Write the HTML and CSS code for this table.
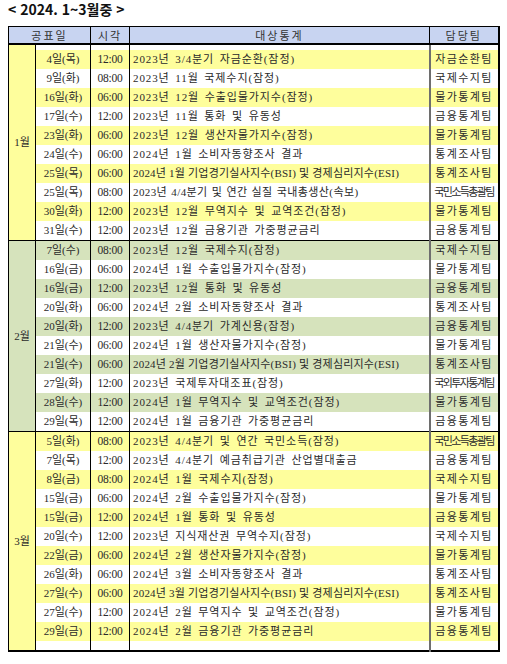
FILE: index.html
```html
<!DOCTYPE html>
<html lang="ko">
<head>
<meta charset="utf-8">
<title>2024. 1~3월중 공표 일정</title>
<link rel="stylesheet" href="styles.css">
</head>
<body>
<h1 class="title">&lt; 2024. 1~3월중 &gt;</h1>
<table class="sched">
  <colgroup>
    <col class="c-mon"><col class="c-date"><col class="c-time"><col class="c-subj"><col class="c-team">
  </colgroup>
  <thead>
    <tr><th colspan="2">공표일</th><th>시각</th><th>대상통계</th><th>담당팀</th></tr>
  </thead>
  <tbody class="jan">
    <tr class="pad"><td class="mon" rowspan="11">1월</td><td class="date"></td><td class="time"></td><td class="subj"></td><td class="team"></td></tr>
    <tr class="hl"><td class="date">4일(목)</td><td class="time">12:00</td><td class="subj">2023년 3/4분기 자금순환(잠정)</td><td class="team">자금순환팀</td></tr>
    <tr><td class="date">9일(화)</td><td class="time">08:00</td><td class="subj">2023년 11월 국제수지(잠정)</td><td class="team">국제수지팀</td></tr>
    <tr class="hl"><td class="date">16일(화)</td><td class="time">06:00</td><td class="subj">2023년 12월 수출입물가지수(잠정)</td><td class="team">물가통계팀</td></tr>
    <tr><td class="date">17일(수)</td><td class="time">12:00</td><td class="subj">2023년 11월 통화 및 유동성</td><td class="team">금융통계팀</td></tr>
    <tr class="hl"><td class="date">23일(화)</td><td class="time">06:00</td><td class="subj">2023년 12월 생산자물가지수(잠정)</td><td class="team">물가통계팀</td></tr>
    <tr><td class="date">24일(수)</td><td class="time">06:00</td><td class="subj">2024년 1월 소비자동향조사 결과</td><td class="team">통계조사팀</td></tr>
    <tr class="hl"><td class="date">25일(목)</td><td class="time">06:00</td><td class="subj tight">2024년 1월 기업경기실사지수(BSI) 및 경제심리지수(ESI)</td><td class="team">통계조사팀</td></tr>
    <tr><td class="date">25일(목)</td><td class="time">08:00</td><td class="subj mid">2023년 4/4분기 및 연간 실질 국내총생산(속보)</td><td class="team long">국민소득총괄팀</td></tr>
    <tr class="hl"><td class="date">30일(화)</td><td class="time">12:00</td><td class="subj">2023년 12월 무역지수 및 교역조건(잠정)</td><td class="team">물가통계팀</td></tr>
    <tr><td class="date">31일(수)</td><td class="time">12:00</td><td class="subj">2023년 12월 금융기관 가중평균금리</td><td class="team">금융통계팀</td></tr>
  </tbody>
  <tbody class="feb">
    <tr class="hl"><td class="mon" rowspan="10">2월</td><td class="date">7일(수)</td><td class="time">08:00</td><td class="subj">2023년 12월 국제수지(잠정)</td><td class="team">국제수지팀</td></tr>
    <tr><td class="date">16일(금)</td><td class="time">06:00</td><td class="subj">2024년 1월 수출입물가지수(잠정)</td><td class="team">물가통계팀</td></tr>
    <tr class="hl"><td class="date">16일(금)</td><td class="time">12:00</td><td class="subj">2023년 12월 통화 및 유동성</td><td class="team">금융통계팀</td></tr>
    <tr><td class="date">20일(화)</td><td class="time">06:00</td><td class="subj">2024년 2월 소비자동향조사 결과</td><td class="team">통계조사팀</td></tr>
    <tr class="hl"><td class="date">20일(화)</td><td class="time">12:00</td><td class="subj">2023년 4/4분기 가계신용(잠정)</td><td class="team">금융통계팀</td></tr>
    <tr><td class="date">21일(수)</td><td class="time">06:00</td><td class="subj">2024년 1월 생산자물가지수(잠정)</td><td class="team">물가통계팀</td></tr>
    <tr class="hl"><td class="date">21일(수)</td><td class="time">06:00</td><td class="subj tight">2024년 2월 기업경기실사지수(BSI) 및 경제심리지수(ESI)</td><td class="team">통계조사팀</td></tr>
    <tr><td class="date">27일(화)</td><td class="time">12:00</td><td class="subj">2023년 국제투자대조표(잠정)</td><td class="team long">국외투자통계팀</td></tr>
    <tr class="hl"><td class="date">28일(수)</td><td class="time">12:00</td><td class="subj">2024년 1월 무역지수 및 교역조건(잠정)</td><td class="team">물가통계팀</td></tr>
    <tr><td class="date">29일(목)</td><td class="time">12:00</td><td class="subj">2024년 1월 금융기관 가중평균금리</td><td class="team">금융통계팀</td></tr>
  </tbody>
  <tbody class="mar">
    <tr class="hl"><td class="mon" rowspan="12">3월</td><td class="date">5일(화)</td><td class="time">08:00</td><td class="subj">2023년 4/4분기 및 연간 국민소득(잠정)</td><td class="team long">국민소득총괄팀</td></tr>
    <tr><td class="date">7일(목)</td><td class="time">12:00</td><td class="subj">2023년 4/4분기 예금취급기관 산업별대출금</td><td class="team">금융통계팀</td></tr>
    <tr class="hl"><td class="date">8일(금)</td><td class="time">08:00</td><td class="subj">2024년 1월 국제수지(잠정)</td><td class="team">국제수지팀</td></tr>
    <tr><td class="date">15일(금)</td><td class="time">06:00</td><td class="subj">2024년 2월 수출입물가지수(잠정)</td><td class="team">물가통계팀</td></tr>
    <tr class="hl"><td class="date">15일(금)</td><td class="time">12:00</td><td class="subj">2024년 1월 통화 및 유동성</td><td class="team">금융통계팀</td></tr>
    <tr><td class="date">20일(수)</td><td class="time">12:00</td><td class="subj">2023년 지식재산권 무역수지(잠정)</td><td class="team">국제수지팀</td></tr>
    <tr class="hl"><td class="date">22일(금)</td><td class="time">06:00</td><td class="subj">2024년 2월 생산자물가지수(잠정)</td><td class="team">물가통계팀</td></tr>
    <tr><td class="date">26일(화)</td><td class="time">06:00</td><td class="subj">2024년 3월 소비자동향조사 결과</td><td class="team">통계조사팀</td></tr>
    <tr class="hl"><td class="date">27일(수)</td><td class="time">06:00</td><td class="subj tight">2024년 3월 기업경기실사지수(BSI) 및 경제심리지수(ESI)</td><td class="team">통계조사팀</td></tr>
    <tr><td class="date">27일(수)</td><td class="time">12:00</td><td class="subj">2024년 2월 무역지수 및 교역조건(잠정)</td><td class="team">물가통계팀</td></tr>
    <tr class="hl"><td class="date">29일(금)</td><td class="time">12:00</td><td class="subj">2024년 2월 금융기관 가중평균금리</td><td class="team">금융통계팀</td></tr>
    <tr class="pad end"><td class="date"></td><td class="time"></td><td class="subj"></td><td class="team"></td></tr>
  </tbody>
</table>
</body>
</html>
```

FILE: styles.css
```css
:root {
  --yellow: #fefe9c;
  --green: #d6e3bc;
  --head: #c8d4f1;
  --ink: #2a2a2a;
}

body {
  margin: 0;
  background: #ffffff;
  color: var(--ink);
  font-family: "Liberation Serif", "Noto Sans CJK KR", serif;
}

.title {
  margin: 0;
  padding-left: 8px;
  height: 26px;
  font: bold 14px/18px "Noto Sans CJK KR", sans-serif;
  color: #111;
}

.sched {
  margin-left: 8px;
  width: 490px;
  border-collapse: collapse;
  table-layout: fixed;
  border: 1px solid #000;
  border-right-width: 2px;
  border-bottom-width: 2px;
  font-size: 11px;
}

.c-mon { width: 27px; }
.c-date { width: 55px; }
.c-time { width: 39px; }
.c-subj { width: 300px; }
.c-team { width: 69px; }

.sched th {
  height: 16px;
  padding: 0;
  background: var(--head);
  font-family: "Noto Sans CJK KR", sans-serif;
  font-weight: normal;
  font-size: 11px;
  line-height: 16px;
  letter-spacing: 2px;
  color: #333;
  border-left: 1px solid #000;
  border-bottom: 2px solid #000;
}

.sched td {
  height: 19px;
  padding: 0;
  line-height: 19px;
  text-align: center;
  white-space: nowrap;
  overflow: hidden;
}

.sched tbody + tbody { border-top: 1px solid #000; }

.sched td.mon {
  font-family: "Liberation Serif", "Noto Sans CJK KR", serif;
  vertical-align: middle;
  border-right: 1px solid #000;
}

.sched td.date { border-right: 1px solid #000; }
.sched td.time { border-right: 1px solid #000; font-size: 11.5px; letter-spacing: -0.2px; }

.sched td.subj {
  text-align: left;
  padding-left: 3px;
  letter-spacing: 0.9px;
  word-spacing: 2px;
}
.sched td.subj.mid { letter-spacing: 0.4px; word-spacing: 1px; }
.sched td.subj.tight { letter-spacing: 0.2px; word-spacing: 0; }

.sched td.team {
  border-left: 2px solid #6e6e6e;
  letter-spacing: 1.4px;
}
.sched td.team.long { letter-spacing: -1.6px; }

.sched tr.pad td { height: 5px; line-height: 0; font-size: 0; }
.sched tr.pad.end td { height: 9px; }
.sched tr.pad td.mon { font-size: 11px; line-height: 19px; }

.jan td.mon,
.mar td.mon,
.jan tr.hl td,
.mar tr.hl td { background: var(--yellow); }

.feb td.mon,
.feb tr.hl td { background: var(--green); }
```
